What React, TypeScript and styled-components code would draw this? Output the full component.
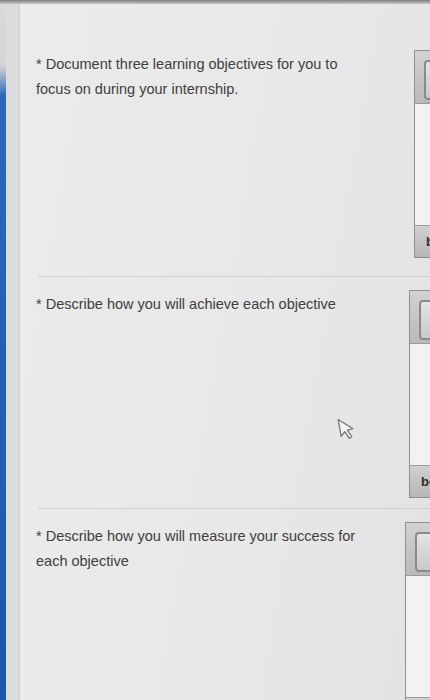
import styled, { createGlobalStyle } from "styled-components";

const Global = createGlobalStyle`
  html, body {
    margin: 0;
    padding: 0;
    width: 430px;
    height: 700px;
    overflow: hidden;
    background: #e6e6e6;
  }
`;

const questions = [
  {
    text: "Document three learning objectives for you to focus on during your internship.",
    edge: 15,
  },
  { text: "Describe how you will achieve each objective", edge: 20 },
  {
    text: "Describe how you will measure your success for each objective",
    edge: 24,
  },
];

export default function App() {
  return (
    <Screen>
      <Global />
      <TopShade />
      <Body>
        <BlueBar />
        <SideStrip />
        <Main>
          {questions.map((q, i) => (
            <Section key={i} $first={i === 0}>
              <Question>* {q.text}</Question>
              <Editor $edge={q.edge}>
                <Toolbar>
                  <ToolButton />
                </Toolbar>
                <EditArea />
                <StatusBar>body</StatusBar>
              </Editor>
            </Section>
          ))}
        </Main>
      </Body>
      <Cursor viewBox="0 0 20 26">
        <path
          d="M2 2 L2 19 L6.4 15 L9.6 22.5 L12.4 21.3 L9.2 14 L15 13.6 Z"
          fill="#f4f4f4"
          stroke="#777"
          strokeWidth="1.3"
          strokeLinejoin="round"
        />
      </Cursor>
    </Screen>
  );
}

const Screen = styled.div`
  position: relative;
  width: 430px;
  height: 700px;
  overflow: hidden;
  display: flex;
  flex-direction: column;
  font-family: "Liberation Sans", Arial, sans-serif;
`;

const TopShade = styled.div`
  height: 4px;
  flex-shrink: 0;
  background: linear-gradient(#7d7d7d, #c9c9c9);
`;

const Body = styled.div`
  flex: 1;
  display: flex;
  min-height: 0;
`;

const BlueBar = styled.div`
  width: 6px;
  flex-shrink: 0;
  background: linear-gradient(
    #dadada 0,
    #d4d4d4 62px,
    #2a68b8 92px,
    #1a58aa 100%
  );
`;

const SideStrip = styled.div`
  width: 13px;
  flex-shrink: 0;
  background: #dcdcdc;
  border-right: 1px solid #d2d2d2;
`;

const Main = styled.div`
  flex: 1;
  min-width: 0;
  padding: 32px 0 0 18px;
  background: linear-gradient(100deg, #ebebeb 0%, #e8e8e8 60%, #e2e2e2 100%);
`;

const Section = styled.div<{ $first?: boolean }>`
  display: flex;
  height: 231px;
  border-top: 1px solid ${(p) => (p.$first ? "transparent" : "#cfcfcf")};
  &:first-child {
    height: 239px;
  }
`;

const Question = styled.div`
  flex: 1;
  padding: 15px 40px 0 0;
  font-size: 14.5px;
  line-height: 25px;
  color: #404040;
  margin-left: -2px;
`;

const Editor = styled.div<{ $edge: number }>`
  width: ${(p) => p.$edge}px;
  flex-shrink: 0;
  margin-top: 13px;
  height: 206px;
  overflow: hidden;
  display: flex;
  flex-direction: column;
  border: 1px solid #8f8f8f;
  border-right: none;
  background: #f1f1f1;
`;

const Toolbar = styled.div`
  height: 53px;
  flex-shrink: 0;
  padding: 9px 0 0 9px;
  box-sizing: border-box;
  background: linear-gradient(#d2d2d2, #b9b9b9);
  border-bottom: 1px solid #9a9a9a;
`;

const ToolButton = styled.div`
  width: 40px;
  height: 36px;
  border: 2px solid #8a8a8a;
  border-radius: 4px;
  background: linear-gradient(#e4e4e4, #c9c9c9);
`;

const EditArea = styled.div`
  flex: 1;
  background: #f2f2f2;
`;

const StatusBar = styled.div`
  height: 32px;
  flex-shrink: 0;
  padding-left: 11px;
  box-sizing: border-box;
  display: flex;
  align-items: center;
  font-size: 13px;
  font-weight: bold;
  color: #2e2e2e;
  background: linear-gradient(#d0d0d0, #b6b6b6);
  border-top: 1px solid #9a9a9a;
`;

const Cursor = styled.svg`
  position: absolute;
  left: 338px;
  top: 416px;
  width: 20px;
  height: 26px;
  transform: rotate(-10deg);
`;
